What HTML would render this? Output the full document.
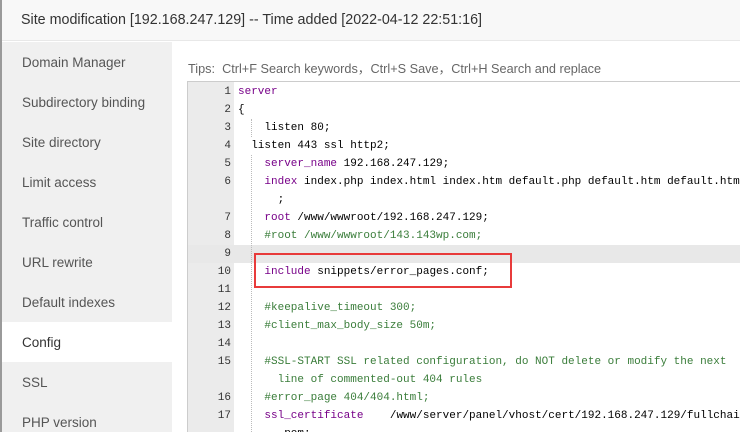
<!DOCTYPE html>
<html><head><meta charset="utf-8"><style>
*{margin:0;padding:0;box-sizing:border-box}
html,body{width:740px;height:432px;overflow:hidden}
body{background:#fff;font-family:"Liberation Sans",sans-serif;position:relative}
.strip{position:absolute;left:0;top:0;width:2px;height:432px;background:#9a9a9a}
.hdr{position:absolute;left:2px;top:0;width:738px;height:41px;background:#f8f8f8;border-bottom:1px solid #e8e8e8;font-size:14.3px;color:#333;line-height:41px;padding-left:19px}
.side{position:absolute;left:2px;top:42px;width:170px;height:390px;background:#f0f0f0}
.side div{height:40px;line-height:41px;padding-left:20px;font-size:13.5px;color:#555}
.side .act{background:#fff;color:#333}
.tips{position:absolute;left:188px;top:58px;font-size:12.7px;color:#666}
.ed{position:absolute;left:187px;top:81px;width:553px;height:351px;overflow:hidden;border-top:1px solid #ccc;border-left:1px solid #ccc;font-family:"Liberation Mono",monospace;font-size:11px}
.in{position:absolute;left:0;top:1px;width:552px;height:349px;overflow:hidden}
.gut{position:absolute;left:0;top:0;width:46px;height:100%;background:#ebebeb}
.ln{position:absolute;left:0;height:18px;line-height:18px;white-space:pre}
.num{width:43px;text-align:right;color:#333}
.code{left:50px;color:#000}
.k{color:#708}.c{color:#3a7d3a}
.g{position:absolute;left:63px;width:0;border-left:1px dotted #bbb}
.box{position:absolute;left:254px;top:253px;width:258px;height:35px;border:2px solid #e83b3b}
</style></head><body>
<div class="strip"></div>
<div class="hdr">Site modification [192.168.247.129] -- Time added [2022-04-12 22:51:16]</div>
<div class="side">
<div>Domain Manager</div><div>Subdirectory binding</div><div>Site directory</div><div>Limit access</div><div>Traffic control</div><div>URL rewrite</div><div>Default indexes</div><div class="act">Config</div><div>SSL</div><div>PHP version</div>
</div>
<div class="tips">Tips:&nbsp; Ctrl+F Search keywords，Ctrl+S Save，Ctrl+H Search and replace</div>
<div class="ed">
<div class="gut"></div>
<div class="in">
<div style="position:absolute;left:0;top:162px;width:552px;height:18px;background:#e8e8e8"></div>
<div class="g" style="top:36px;height:18px"></div>
<div class="g" style="top:72px;height:277px"></div>
<div class="ln num" style="top:0">1</div><div class="ln code k" style="top:0">server</div>
<div class="ln num" style="top:18px">2</div><div class="ln code" style="top:18px">{</div>
<div class="ln num" style="top:36px">3</div><div class="ln code" style="top:36px">    listen 80;</div>
<div class="ln num" style="top:54px">4</div><div class="ln code" style="top:54px">  listen 443 ssl http2;</div>
<div class="ln num" style="top:72px">5</div><div class="ln code" style="top:72px">    <span class="k">server_name</span> 192.168.247.129;</div>
<div class="ln num" style="top:90px">6</div><div class="ln code" style="top:90px">    <span class="k">index</span> index.php index.html index.htm default.php default.htm default.htm</div>
<div class="ln code" style="top:108px">      ;</div>
<div class="ln num" style="top:126px">7</div><div class="ln code" style="top:126px">    <span class="k">root</span> /www/wwwroot/192.168.247.129;</div>
<div class="ln num" style="top:144px">8</div><div class="ln code c" style="top:144px">    #root /www/wwwroot/143.143wp.com;</div>
<div class="ln num" style="top:162px">9</div>
<div class="ln num" style="top:180px">10</div><div class="ln code" style="top:180px">    <span class="k">include</span> snippets/error_pages.conf;</div>
<div class="ln num" style="top:198px">11</div>
<div class="ln num" style="top:216px">12</div><div class="ln code c" style="top:216px">    #keepalive_timeout 300;</div>
<div class="ln num" style="top:234px">13</div><div class="ln code c" style="top:234px">    #client_max_body_size 50m;</div>
<div class="ln num" style="top:252px">14</div>
<div class="ln num" style="top:270px">15</div><div class="ln code c" style="top:270px">    #SSL-START SSL related configuration, do NOT delete or modify the next</div>
<div class="ln code c" style="top:288px">      line of commented-out 404 rules</div>
<div class="ln num" style="top:306px">16</div><div class="ln code c" style="top:306px">    #error_page 404/404.html;</div>
<div class="ln num" style="top:324px">17</div><div class="ln code" style="top:324px;width:502px;overflow:hidden">    <span class="k">ssl_certificate</span>    /www/server/panel/vhost/cert/192.168.247.129/fullchain</div>
<div class="ln code" style="top:342px;height:7px;overflow:hidden">      .pem;</div>
</div>
</div>
<div class="box"></div>
</body></html>
